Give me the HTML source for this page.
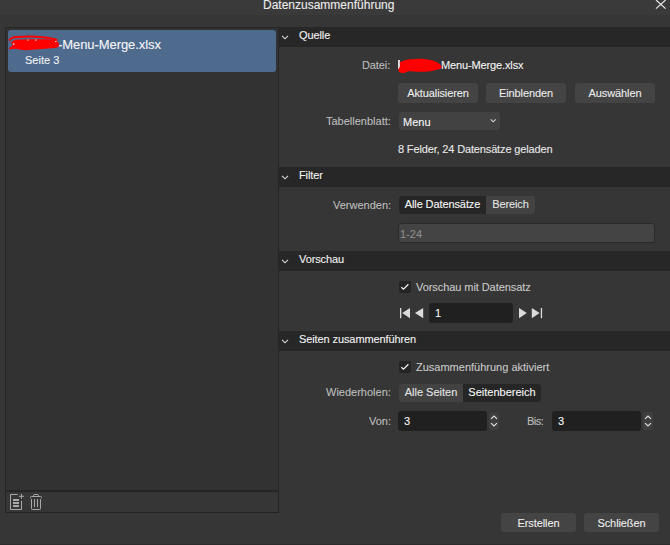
<!DOCTYPE html>
<html><head><meta charset="utf-8">
<style>
*{box-sizing:border-box;margin:0;padding:0}
html,body{-webkit-text-stroke:0.1px currentColor;width:670px;height:545px;overflow:hidden;background:#363636;font-family:"Liberation Sans",sans-serif;color:#e6e6e6}
.a{position:absolute}
.t{position:absolute;white-space:nowrap;line-height:1;font-size:11px}
.lbl{color:#bdbdbd}
.hdr{position:absolute;left:279px;width:391px;height:20px;background:#272727}
.hdr .t{left:20px;top:3px;color:#f2f2f2;letter-spacing:-0.1px}
.hdr svg{position:absolute;left:2px;top:8px}
.btn{position:absolute;background:#444444;border-radius:3px;height:20px;text-align:center;font-size:11px;line-height:21px;color:#ececec;white-space:nowrap;letter-spacing:-0.1px}
.inp{position:absolute;background:#202020;border-radius:3px}
.seg{position:absolute;height:18px;font-size:11px;line-height:17px;text-align:center;white-space:nowrap}
</style></head><body>
<!-- title band -->
<div class="a" style="left:0;top:0;width:670px;height:15px;background:#3a3a3a"></div>
<div class="t" style="left:263px;top:-1px;font-size:12px;color:#ececec">Datenzusammenführung</div>
<svg class="a" style="left:655px;top:-1px" width="12" height="11" viewBox="0 0 12 11"><path d="M1 1 L10.6 9.6 M10.6 1 L1 9.6" stroke="#e6e6e6" stroke-width="1.2"/></svg>

<!-- left panel -->
<div class="a" style="left:5px;top:27px;width:274px;height:464px;background:#323232;border:1px solid #262626"></div>
<div class="a" style="left:8px;top:30px;width:268px;height:42px;background:#4e6b8e;border-radius:3px"></div>
<div class="t" style="left:58px;top:38px;font-size:13px;color:#f6f6f6;letter-spacing:-0.07px">-Menu-Merge.xlsx</div>
<svg class="a" style="left:0;top:0" width="80" height="60"><path d="M9.6 39.8 C11 37.8 14 37.2 17 37 C25 36.4 35 36.4 45 37.4 C50 38 54 38.7 56.5 39.8" stroke="#ff0000" stroke-width="2" fill="none" stroke-linecap="round"/><path d="M9.3 39.5 C10 41 11 42 11.3 42.5 C13 40.4 15 39.6 17.5 39.4 C25 39.3 35 39.2 47 39.2 C52 39.4 55 39.8 56.5 40.5 C58 41.6 58.8 43.2 59.2 44.8 C59.5 46.5 58 47.6 55 48 C50 48.4 42 49 32 49.7 C28 50 25 50.3 22.5 50.1 C19 49.6 17 48.8 15.7 48.8 C13 49 10.5 49.6 9 49.3 C9 48 9.8 47.3 10.6 47 C11.5 46 12.5 45.2 13 44.8 C11.5 43.6 9.6 41.8 9.3 39.5 Z" fill="#ff0000"/><rect x="13" y="43.5" width="1.5" height="1.2" fill="#f0e8e8"/><rect x="27" y="39.6" width="1.5" height="1" fill="#f4c8a0"/><rect x="35" y="39.6" width="1.5" height="1" fill="#f0f0f0"/><rect x="55" y="41" width="1.5" height="1" fill="#f0d0d0"/></svg>
<div class="t" style="left:25px;top:55px;font-size:11px;color:#f2f2f2">Seite 3</div>
<div class="a" style="left:5px;top:491px;width:274px;height:22px;background:#363636;border:1px solid #242424"></div>

<!-- right: Quelle -->
<div class="hdr" style="top:27px"><svg width="8" height="5" viewBox="0 0 8 5"><path d="M1 0.8 L4 3.8 L7 0.8" stroke="#dcdcdc" stroke-width="1.1" fill="none"/></svg><div class="t">Quelle</div></div>
<div class="t lbl" style="left:362px;top:60px;letter-spacing:-0.1px">Datei:</div>
<div class="t" style="left:441px;top:60px;color:#f4f4f4;letter-spacing:-0.13px">Menu-Merge.xlsx</div>
<div class="a" style="left:398px;top:60px;width:1.5px;height:9px;background:#dcdcdc"></div><svg class="a" style="left:390px;top:50px" width="60" height="30"><path d="M9.7 12.3 C13 10.5 17 9.4 20.9 9.2 C25 8.8 29 8.6 32.5 8.7 C37 9.2 40 9.8 42.4 10.5 C45 11.3 47 12.2 47.8 12.7 C50 13.8 51.5 15.5 51.8 16.8 C51.5 18 50.5 18.8 49.6 19 C46 20 43 20.7 40.6 21.2 C36 21.6 33 21.7 29.9 21.7 C25 21.6 22 21.3 19.1 21.2 C17 21.5 15.5 22.6 13.7 23 C11.5 23.2 9.5 22.3 8.4 21.2 C8.3 20 8.6 19.5 8.8 19 C9.2 17.5 9.8 16.5 10.2 15.4 C10 14.2 9.8 13.2 9.7 12.3 Z" fill="#ff0000"/></svg>
<div class="btn" style="left:398px;top:83px;width:80px">Aktualisieren</div>
<div class="btn" style="left:486px;top:83px;width:80px">Einblenden</div>
<div class="btn" style="left:575px;top:83px;width:80px">Auswählen</div>
<div class="t lbl" style="left:326px;top:116px">Tabellenblatt:</div>
<div class="a" style="left:399px;top:112px;width:101px;height:18px;background:#424242;border-radius:3px"></div>
<div class="t" style="left:403px;top:117px;color:#f6f6f6">Menu</div>
<svg class="a" style="left:490px;top:118px" width="8" height="6" viewBox="0 0 8 6"><path d="M0.7 1.3 L3.2 3.8 L5.7 1.3" stroke="#d4d4d4" stroke-width="1.1" fill="none"/></svg>
<div class="t" style="left:398px;top:144px;color:#e8e8e8;letter-spacing:-0.15px">8 Felder, 24 Datensätze geladen</div>

<!-- Filter -->
<div class="hdr" style="top:167px"><svg width="8" height="5" viewBox="0 0 8 5"><path d="M1 0.8 L4 3.8 L7 0.8" stroke="#dcdcdc" stroke-width="1.1" fill="none"/></svg><div class="t">Filter</div></div>
<div class="t lbl" style="left:333px;top:200px">Verwenden:</div>
<div class="a" style="left:399px;top:196px;width:136px;height:18px;background:#424242;border-radius:3px;overflow:hidden">
  <div class="seg" style="left:0;top:0;width:87px;background:#262626;color:#f6f6f6;letter-spacing:-0.1px">Alle Datensätze</div>
  <div class="seg" style="left:87px;top:0;width:49px;color:#e4e4e4;letter-spacing:-0.1px">Bereich</div>
</div>
<div class="a" style="left:398px;top:223px;width:257px;height:20px;background:#444444;border:1px solid #2a2a2a;border-radius:3px"></div>
<div class="t" style="left:400px;top:229px;color:#8c8c8c">1-24</div>

<!-- Vorschau -->
<div class="hdr" style="top:251px"><svg width="8" height="5" viewBox="0 0 8 5"><path d="M1 0.8 L4 3.8 L7 0.8" stroke="#dcdcdc" stroke-width="1.1" fill="none"/></svg><div class="t">Vorschau</div></div>
<div class="a" style="left:399px;top:281px;width:12px;height:12px;background:#242424;border-radius:2px"></div>
<svg class="a" style="left:399px;top:281px" width="12" height="12" viewBox="0 0 12 12"><path d="M2.3 6.2 L4.5 8.2 L9.4 3.3" stroke="#f0f0f0" stroke-width="1.3" fill="none"/></svg>
<div class="t lbl" style="left:416px;top:282px;color:#c8c8c8;letter-spacing:-0.07px">Vorschau mit Datensatz</div>
<svg class="a" style="left:399px;top:307px" width="146" height="12" viewBox="0 0 146 12">
  <rect x="1" y="1" width="1.3" height="10.2" fill="#dcdcdc"/><path d="M3.2 6 L11 1 L11 11.2 Z" fill="#dcdcdc"/>
  <path d="M16 6 L24.2 1 L24.2 11.2 Z" fill="#dcdcdc"/>
  <path d="M120 1 L120 11.2 L127.8 6 Z" fill="#dcdcdc"/>
  <path d="M132.8 1 L132.8 11.2 L140.6 6 Z" fill="#dcdcdc"/><rect x="141.8" y="1" width="1.3" height="10.2" fill="#dcdcdc"/>
</svg>
<div class="inp" style="left:429px;top:303px;width:84px;height:20px"></div>
<div class="t" style="left:435px;top:308px;color:#f4f4f4">1</div>

<!-- Seiten -->
<div class="hdr" style="top:331px"><svg width="8" height="5" viewBox="0 0 8 5"><path d="M1 0.8 L4 3.8 L7 0.8" stroke="#dcdcdc" stroke-width="1.1" fill="none"/></svg><div class="t">Seiten zusammenführen</div></div>
<div class="a" style="left:399px;top:361px;width:12px;height:12px;background:#242424;border-radius:2px"></div>
<svg class="a" style="left:399px;top:361px" width="12" height="12" viewBox="0 0 12 12"><path d="M2.3 6.2 L4.5 8.2 L9.4 3.3" stroke="#f0f0f0" stroke-width="1.3" fill="none"/></svg>
<div class="t lbl" style="left:416px;top:362px;color:#c8c8c8">Zusammenführung aktiviert</div>
<div class="t lbl" style="left:326px;top:387px">Wiederholen:</div>
<div class="a" style="left:399px;top:384px;width:142px;height:18px;background:#424242;border-radius:3px;overflow:hidden">
  <div class="seg" style="left:0;top:0;width:64px;color:#e4e4e4">Alle Seiten</div>
  <div class="seg" style="left:64px;top:0;width:78px;background:#262626;color:#f6f6f6">Seitenbereich</div>
</div>
<div class="t lbl" style="left:369px;top:416px">Von:</div>
<div class="inp" style="left:398px;top:411px;width:89px;height:20px"></div>
<div class="t" style="left:404px;top:416px;color:#f4f4f4">3</div>
<div class="a" style="left:489px;top:412px;width:10px;height:18px;background:#3f3f3f;border-radius:3px"></div>
<svg class="a" style="left:489px;top:412px" width="10" height="18" viewBox="0 0 10 18"><path d="M2 6.8 L5 4 L8 6.8 M2 11.2 L5 14 L8 11.2" stroke="#e4e4e4" stroke-width="1.1" fill="none"/></svg>
<div class="t lbl" style="left:527px;top:416px;letter-spacing:-0.5px">Bis:</div>
<div class="inp" style="left:552px;top:411px;width:89px;height:20px"></div>
<div class="t" style="left:558px;top:416px;color:#f4f4f4">3</div>
<div class="a" style="left:643px;top:412px;width:10px;height:18px;background:#3f3f3f;border-radius:3px"></div>
<svg class="a" style="left:643px;top:412px" width="10" height="18" viewBox="0 0 10 18"><path d="M2 6.8 L5 4 L8 6.8 M2 11.2 L5 14 L8 11.2" stroke="#e4e4e4" stroke-width="1.1" fill="none"/></svg>

<!-- bottom buttons -->
<div class="btn" style="left:501px;top:513px;width:75px;height:19px;line-height:20px">Erstellen</div>
<div class="btn" style="left:584px;top:513px;width:75px;height:19px;line-height:20px">Schließen</div>

<!-- toolbar icons -->
<svg class="a" style="left:5px;top:490px" width="50" height="22" viewBox="0 0 50 22">
  <path d="M12.7 4.5 H5.5 V19.5 H16.5 V10.8" stroke="#a8a8a8" stroke-width="1" fill="none"/>
  <path d="M13.9 6.3 H19 M16.45 3.8 V8.9" stroke="#a8a8a8" stroke-width="1" fill="none"/>
  <rect x="8" y="9" width="6" height="2" fill="#a8a8a8"/><rect x="8" y="12" width="6" height="2" fill="#a8a8a8"/><rect x="8" y="15" width="6" height="2" fill="#a8a8a8"/>
  <path d="M25.5 8.2 V7.3 Q25.5 6.5 26.5 6.5 H35.5 Q36.5 6.5 36.5 7.3 V8.2 M28.5 6.5 V5.3 Q28.5 4.5 29.5 4.5 H32.5 Q33.5 4.5 33.5 5.3 V6.5 M26.5 9 V18.6 Q26.5 19.5 27.5 19.5 H34.5 Q35.5 19.5 35.5 18.6 V9 M29.5 9 V17 M32.5 9 V17" stroke="#a8a8a8" stroke-width="1" fill="none"/>
</svg>
<div class="a" style="left:0;top:544px;width:670px;height:1px;background:#2c2c2c"></div>
</body></html>
